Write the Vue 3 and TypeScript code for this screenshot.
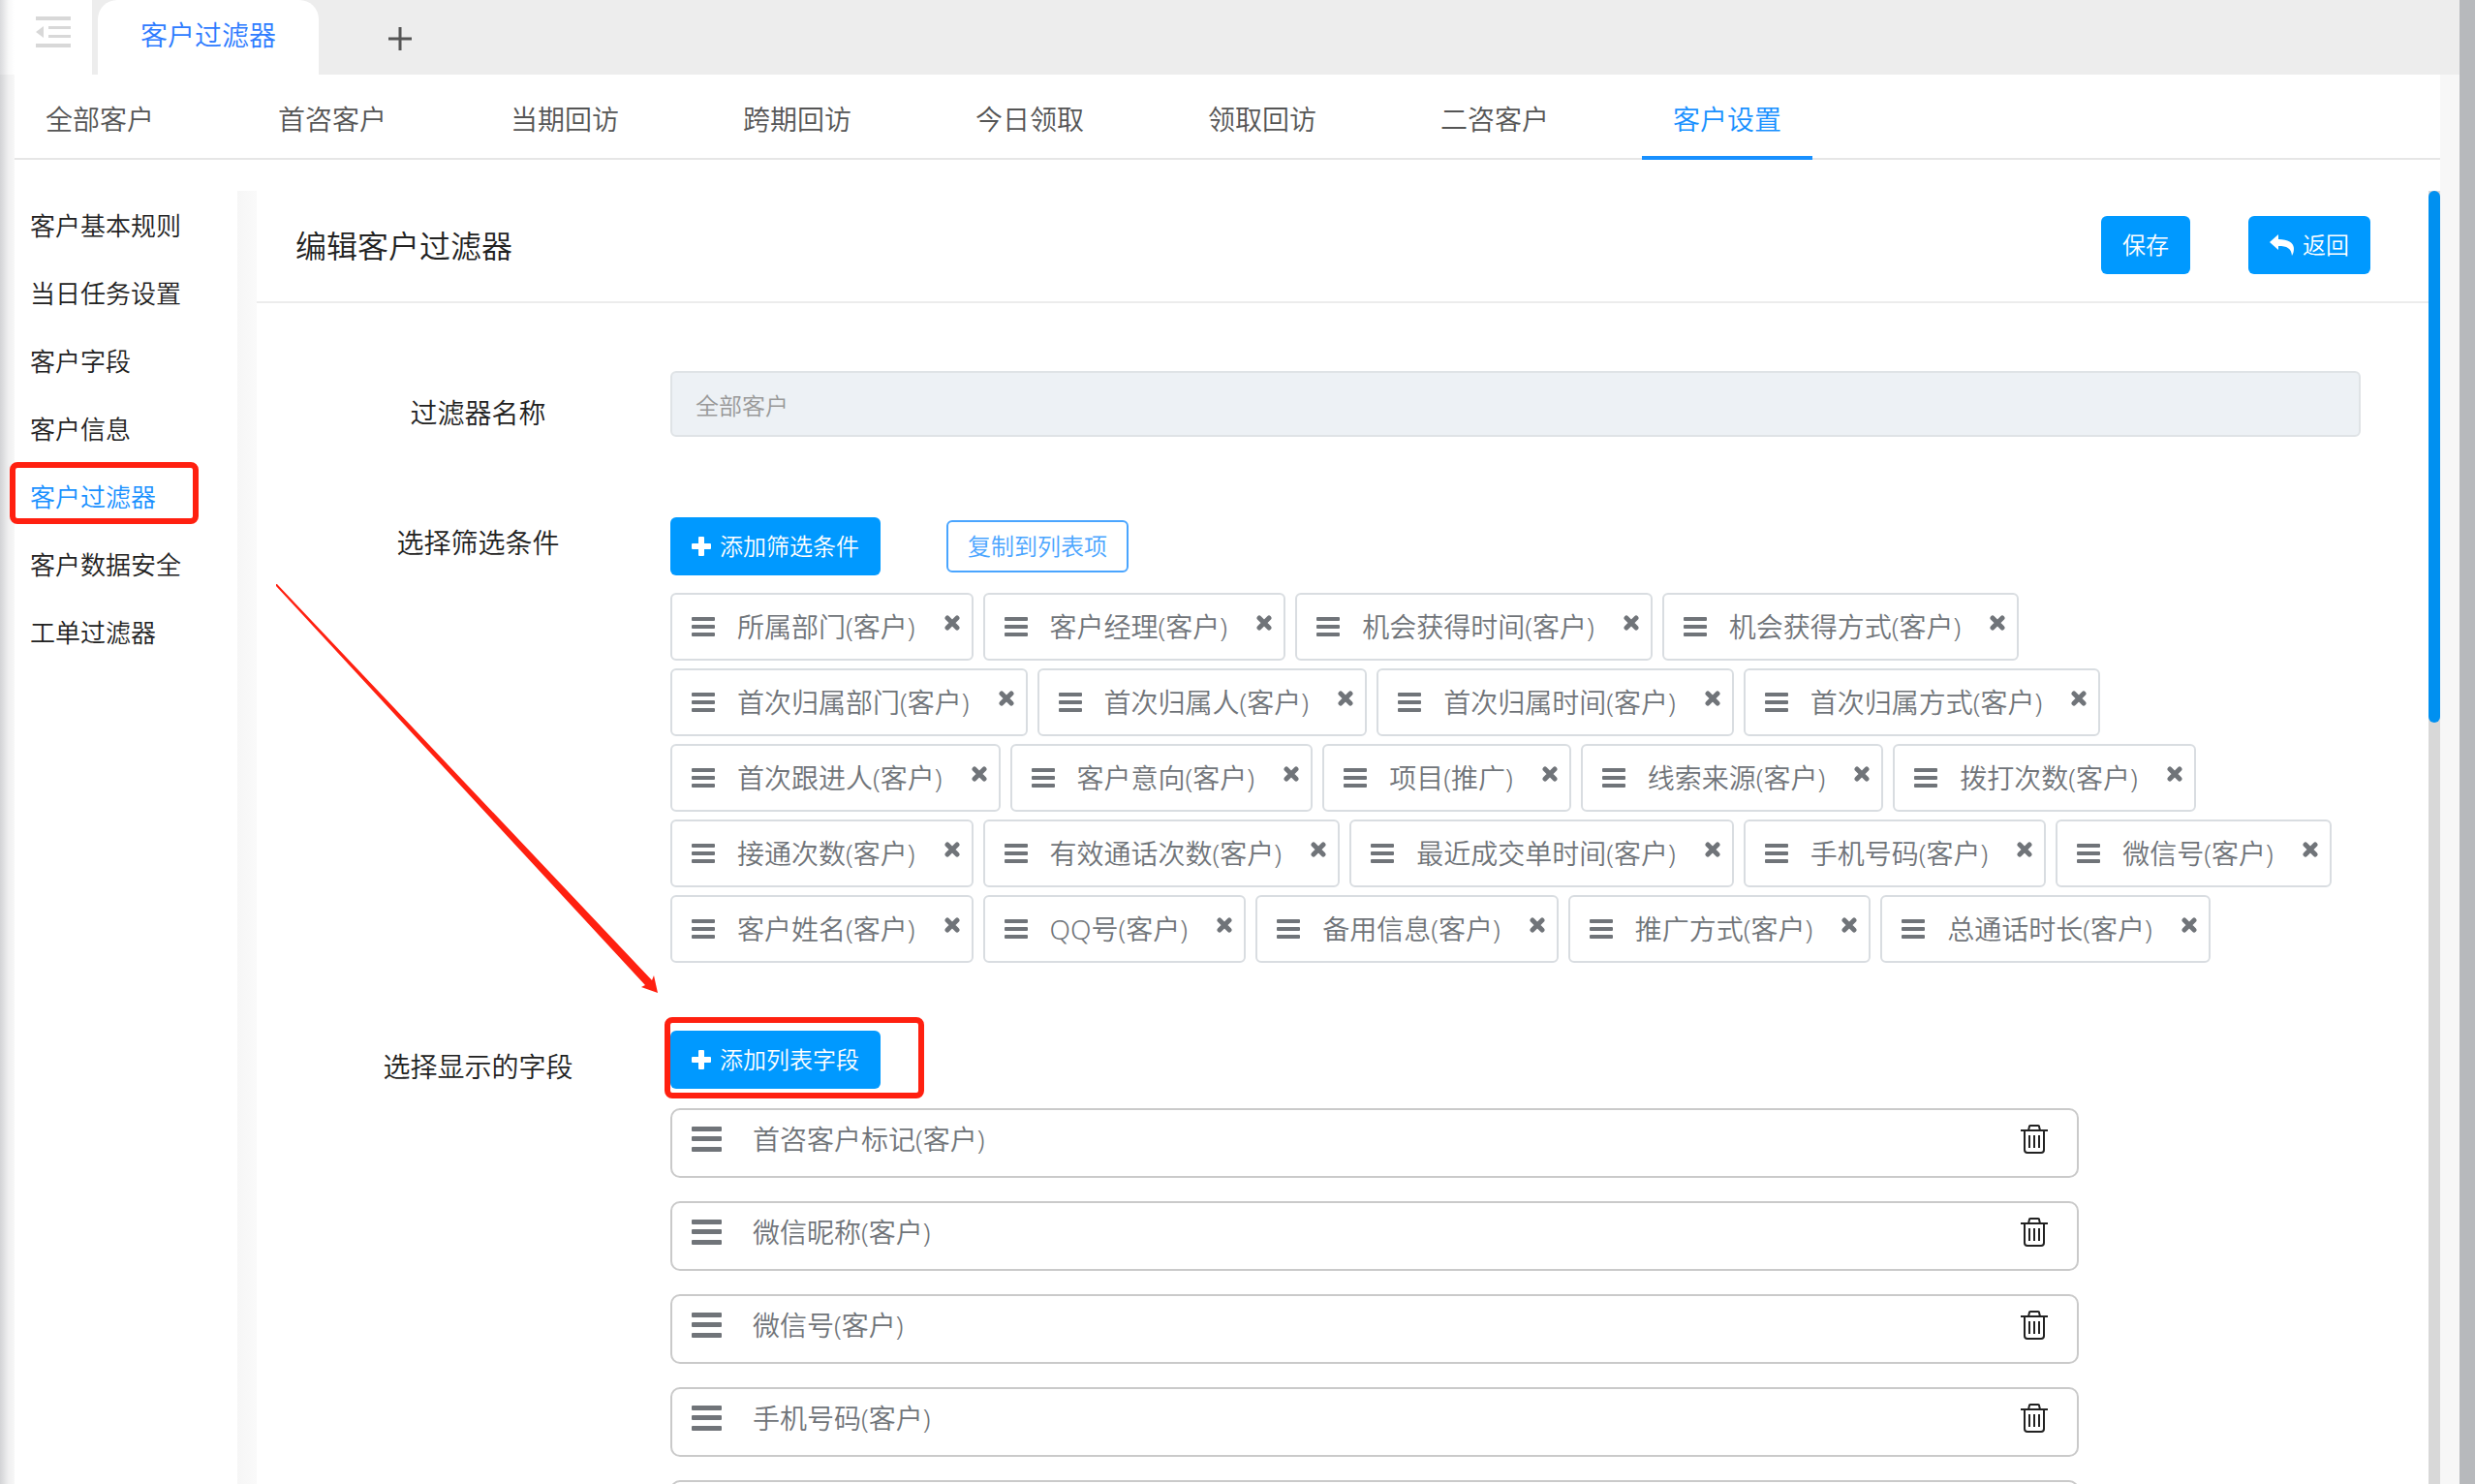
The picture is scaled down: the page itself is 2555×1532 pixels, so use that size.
<script setup lang="ts">
import { ref } from 'vue'

const navItems: string[] = ['全部客户', '首咨客户', '当期回访', '跨期回访', '今日领取', '领取回访', '二咨客户', '客户设置']
const activeNav = ref('客户设置')

const sideItems: string[] = ['客户基本规则', '当日任务设置', '客户字段', '客户信息', '客户过滤器', '客户数据安全', '工单过滤器']
const activeSide = ref('客户过滤器')

const filterName = ref('全部客户')

const conditions = ref<string[]>([
  '所属部门(客户)', '客户经理(客户)', '机会获得时间(客户)', '机会获得方式(客户)',
  '首次归属部门(客户)', '首次归属人(客户)', '首次归属时间(客户)', '首次归属方式(客户)',
  '首次跟进人(客户)', '客户意向(客户)', '项目(推广)', '线索来源(客户)', '拨打次数(客户)',
  '接通次数(客户)', '有效通话次数(客户)', '最近成交单时间(客户)', '手机号码(客户)', '微信号(客户)',
  '客户姓名(客户)', 'QQ号(客户)', '备用信息(客户)', '推广方式(客户)', '总通话时长(客户)',
])

const columns = ref<string[]>(['首咨客户标记(客户)', '微信昵称(客户)', '微信号(客户)', '手机号码(客户)', ''])

function removeCondition(index: number): void {
  conditions.value.splice(index, 1)
}

function removeColumn(index: number): void {
  columns.value.splice(index, 1)
}
</script>

<template>
  <div class="app">
    <div class="shell">
      <header class="topbar">
        <button class="collapse" type="button" aria-label="collapse">
          <svg width="36" height="32" viewBox="0 0 36 32">
            <path d="M0 0h36v4H0zM13 10h23v3H13zM13 19h23v3H13zM0 28h36v4H0zM0 16l8-6v12z" fill="#d8d8d8" />
          </svg>
        </button>
        <a class="tab" href="#">客户过滤器</a>
        <button class="add-tab" type="button" aria-label="add">
          <svg width="24" height="24" viewBox="0 0 24 24">
            <path d="M12 0v24M0 12h24" stroke="#555" stroke-width="3" />
          </svg>
        </button>
      </header>

      <div class="page">
        <nav class="nav">
          <a
            v-for="item in navItems"
            :key="item"
            href="#"
            class="nav-item"
            :class="{ active: item === activeNav }"
            @click.prevent="activeNav = item"
          >{{ item }}</a>
        </nav>

        <div class="body">
          <aside class="side">
            <a
              v-for="item in sideItems"
              :key="item"
              href="#"
              class="side-item"
              :class="{ active: item === activeSide }"
              @click.prevent="activeSide = item"
            >{{ item }}</a>
          </aside>
          <div class="divider"></div>

          <main class="panel">
            <div class="panel-head">
              <h1 class="title">编辑客户过滤器</h1>
              <button class="btn" type="button">保存</button>
              <button class="btn" type="button">
                <svg width="25" height="22" viewBox="0 0 25 22">
                  <path d="M9 0v5c11 0 16 4 16 10 0 3-1 5-2 7-.6-7-4-10-14-10v4L0 8z" fill="#fff" />
                </svg>
                返回
              </button>
            </div>

            <form class="form" @submit.prevent>
              <div class="field field-name">
                <label class="label" for="filter-name">过滤器名称</label>
                <div class="control">
                  <input id="filter-name" v-model="filterName" class="input" type="text" disabled />
                </div>
              </div>

              <div class="field field-conditions">
                <div class="label">选择筛选条件</div>
                <div class="control">
                  <div class="actions">
                    <button class="btn" type="button">
                      <svg width="20" height="20" viewBox="0 0 20 20">
                        <path d="M8 0h4q1 0 1 1v6h6q1 0 1 1v4q0 1-1 1h-6v6q0 1-1 1H8q-1 0-1-1v-6H1q-1 0-1-1V8q0-1 1-1h6V1q0-1 1-1z" fill="#fff" />
                      </svg>
                      添加筛选条件
                    </button>
                    <button class="btn-outline" type="button">复制到列表项</button>
                  </div>
                  <ul class="chips">
                    <li v-for="(item, i) in conditions" :key="item" class="chip">
                      <svg width="24" height="20" viewBox="0 0 24 20">
                        <path d="M1 0h22q1 0 1 1v2q0 1-1 1H1q-1 0-1-1V1q0-1 1-1zM1 8h22q1 0 1 1v2q0 1-1 1H1q-1 0-1-1V9q0-1 1-1zM1 16h22q1 0 1 1v2q0 1-1 1H1q-1 0-1-1v-2q0-1 1-1z" fill="#707479" />
                      </svg>
                      <span class="chip-text">{{ item }}</span>
                      <button class="chip-close" type="button" aria-label="remove" @click="removeCondition(i)">
                        <svg width="16" height="16" viewBox="0 0 16 16">
                          <path d="M3 3l10 10M13 3L3 13" stroke="#707479" stroke-width="5" stroke-linecap="round" />
                        </svg>
                      </button>
                    </li>
                  </ul>
                </div>
              </div>

              <div class="field field-columns">
                <div class="label">选择显示的字段</div>
                <div class="control">
                  <div class="actions">
                    <button class="btn" type="button">
                      <svg width="20" height="20" viewBox="0 0 20 20">
                        <path d="M8 0h4q1 0 1 1v6h6q1 0 1 1v4q0 1-1 1h-6v6q0 1-1 1H8q-1 0-1-1v-6H1q-1 0-1-1V8q0-1 1-1h6V1q0-1 1-1z" fill="#fff" />
                      </svg>
                      添加列表字段
                    </button>
                    <span class="mark mark-button"></span>
                  </div>
                  <ul class="columns">
                    <li v-for="(item, i) in columns" :key="i" class="column">
                      <svg width="31" height="26" viewBox="0 0 31 26">
                        <path d="M1 0h29q1 0 1 1v3q0 1-1 1H1q-1 0-1-1V1q0-1 1-1zM1 10h29q1 0 1 1v3q0 1-1 1H1q-1 0-1-1v-3q0-1 1-1zM1 21h29q1 0 1 1v3q0 1-1 1H1q-1 0-1-1v-3q0-1 1-1z" fill="#707479" />
                      </svg>
                      <span class="column-text">{{ item }}</span>
                      <button class="column-delete" type="button" aria-label="delete" @click="removeColumn(i)">
                        <svg width="28" height="30" viewBox="0 0 28 30" fill="none" stroke="#222" stroke-width="2">
                          <path d="M0 6h28" />
                          <path d="M8 6l1-4q0-1 1-1h8q1 0 1 1l1 4" />
                          <path d="M4 6v20q0 3 3 3h14q3 0 3-3V6" />
                          <path d="M9 11v13M14 11v13M19 11v13" />
                        </svg>
                      </button>
                    </li>
                  </ul>
                </div>
              </div>
            </form>
          </main>
          <div class="scroll"><div class="scroll-thumb"></div></div>
        </div>
      </div>
    </div>
    <div class="window-edge"></div>

    <div class="left-shadow"></div>
    <span class="mark mark-side"></span>
    <svg class="arrow" width="396" height="424" viewBox="0 0 396 424">
      <path d="M0 0L1 0L388 409L390 404L394 422L377 416L381 414L0 2z" fill="#ff2010" />
    </svg>
  </div>
</template>

<style>
body {
  margin: 0;
}
</style>

<style scoped>
.app {
  position: relative;
  display: flex;
  height: 100vh;
  overflow: hidden;
  background: #f7f7f7;
  font-family: "Noto Sans", "Noto Sans CJK SC", sans-serif;
  font-weight: 350;
  font-size: 28px;
  line-height: 40px;
  color: #222;
}
.app *,
.app *::before,
.app *::after {
  box-sizing: border-box;
}
a {
  color: inherit;
  text-decoration: none;
}
button {
  padding: 0;
  border: 0;
  background: none;
  font: inherit;
  cursor: pointer;
}
svg {
  display: block;
  flex: none;
}
ul {
  margin: 0;
  padding: 0;
  list-style: none;
}

.shell {
  flex: 1;
  min-width: 0;
  display: flex;
  flex-direction: column;
}
.window-edge {
  width: 16px;
  background: #b7b9bc;
}

.topbar {
  flex: none;
  display: flex;
  height: 77px;
  background: #ededed;
}
.collapse {
  display: flex;
  width: 95px;
  padding: 17px 0 0 37px;
  background: #fff;
}
.tab {
  width: 228px;
  margin-left: 6px;
  padding-top: 16px;
  border-radius: 20px 20px 0 0;
  background: #fff;
  color: #2d7bff;
  text-align: center;
}
.add-tab {
  padding: 2px 72px 0;
}

.page {
  flex: 1;
  min-height: 0;
  display: flex;
  flex-direction: column;
  margin: 0 20px 0 15px;
  background: #fff;
}
.nav {
  flex: none;
  display: flex;
  gap: 64px;
  height: 88px;
  border-bottom: 2px solid #e6e6e6;
}
.nav-item {
  height: 88px;
  padding: 26px 32px 0;
  color: #555;
}
.nav-item.active {
  border-bottom: 4px solid #1890ff;
  color: #1890ff;
}

.body {
  flex: 1;
  min-height: 0;
  display: flex;
  padding-top: 32px;
}
.side {
  flex: none;
  width: 230px;
  font-size: 26px;
}
.side-item {
  display: block;
  height: 70px;
  padding: 16px 16px 0;
}
.side-item.active {
  color: #1890ff;
}
.divider {
  flex: none;
  width: 20px;
  background: linear-gradient(90deg, #f6f6f6, #fafafa);
}
.panel {
  flex: 1;
  min-width: 0;
  overflow: hidden;
}
.panel-head {
  display: flex;
  align-items: center;
  gap: 60px;
  height: 116px;
  padding: 0 60px 0 40px;
  border-bottom: 2px solid #ececec;
}
.title {
  flex: 1;
  margin: 0;
  font-size: 32px;
  font-weight: inherit;
}
.panel-head .btn {
  margin-bottom: 2px;
}
.btn {
  display: flex;
  align-items: center;
  gap: 9px;
  height: 60px;
  padding: 0 22px;
  border-radius: 6px;
  background: #0099ff;
  color: #fff;
  font-size: 24px;
}
.btn-outline {
  height: 54px;
  padding: 0 20px;
  border: 2px solid #4aa5ff;
  border-radius: 6px;
  background: #fff;
  color: #4aa5ff;
  font-size: 24px;
}

.field {
  display: flex;
  padding-right: 70px;
}
.field-name {
  padding-top: 70px;
}
.field-conditions {
  padding-top: 83px;
}
.field-columns {
  padding-top: 70px;
}
.label {
  flex: none;
  width: 397px;
  margin-right: 30px;
  padding-left: 60px;
  text-align: center;
}
.field-name .label {
  padding-top: 23px;
}
.field-conditions .label {
  padding-top: 6px;
}
.field-columns .label {
  padding-top: 17px;
}
.control {
  flex: 1;
  min-width: 0;
}
.input {
  display: block;
  width: 100%;
  height: 68px;
  padding: 0 24px;
  border: 2px solid #dfe3e6;
  border-radius: 6px;
  background: #edf1f5;
  color: #999;
  font: inherit;
  font-size: 24px;
}
.actions {
  position: relative;
  display: flex;
  align-items: center;
  gap: 68px;
}

.chips {
  display: flex;
  flex-wrap: wrap;
  gap: 8px 10px;
  margin-top: 18px;
}
.chip {
  display: flex;
  align-items: center;
  height: 70px;
  padding: 0 12px 0 20px;
  border: 2px solid #d9dde1;
  border-radius: 6px;
  color: #707479;
}
.chip-text {
  margin: 0 30px 0 23px;
}
.chip-close {
  padding-bottom: 8px;
}

.columns {
  display: flex;
  flex-direction: column;
  gap: 24px;
  width: 1454px;
  max-width: 100%;
  margin-top: 20px;
}
.column {
  display: flex;
  align-items: center;
  height: 72px;
  padding: 0 30px 8px 20px;
  border: 2px solid #cacaca;
  border-radius: 10px;
  color: #707479;
}
.column-text {
  flex: 1;
  margin-left: 32px;
}

.scroll {
  flex: none;
  width: 12px;
  background: #d8d8d8;
}
.scroll-thumb {
  height: 549px;
  border-radius: 6px;
  background: #0090f0;
}

.left-shadow {
  position: absolute;
  top: 0;
  bottom: 0;
  left: 0;
  width: 15px;
  background: linear-gradient(90deg, rgba(20, 25, 40, 0.16), rgba(20, 25, 40, 0.03) 60%, rgba(20, 25, 40, 0));
}
.mark {
  position: absolute;
  border: 6px solid #ff2010;
  border-radius: 8px;
  pointer-events: none;
}
.mark-side {
  top: 477px;
  left: 10px;
  width: 195px;
  height: 64px;
}
.mark-button {
  top: -14px;
  left: -6px;
  width: 268px;
  height: 84px;
}
.arrow {
  position: absolute;
  top: 603px;
  left: 285px;
  pointer-events: none;
}
</style>
